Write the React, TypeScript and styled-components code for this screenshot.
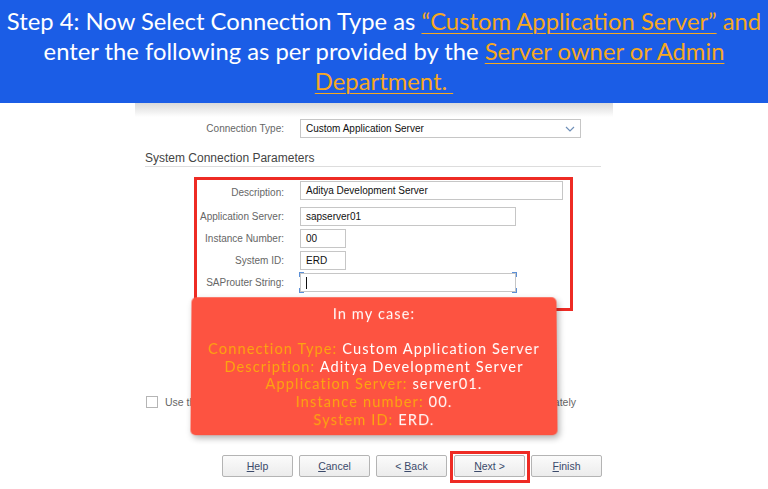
import React from 'react';
import styled, { createGlobalStyle } from 'styled-components';

const GlobalStyle = createGlobalStyle`
  html, body {
    margin: 0;
    padding: 0;
    background: #ffffff;
  }
`;

const Page = styled.div`
  position: relative;
  width: 768px;
  height: 489px;
  overflow: hidden;
  background: #ffffff;
`;

const Banner = styled.div`
  height: 103px;
  box-sizing: border-box;
  padding-top: 6px;
  background: #1b5de6;
  color: #ffffff;
  font-family: Lato, 'Noto Sans', sans-serif;
  font-size: 23.8px;
  line-height: 30px;
  text-align: center;
`;

const Accent = styled.span<{ $underline?: boolean }>`
  color: #f6a81f;
  text-decoration: ${(p) => (p.$underline ? 'underline' : 'none')};
  text-decoration-thickness: 1px;
  text-underline-offset: 3px;
`;

const Dialog = styled.div`
  margin: 0 155px 0 135px;
  height: 386px;
  display: flex;
  flex-direction: column;
  background: linear-gradient(#d9d9d9 0px, #ffffff 14px);
  font-family: 'Liberation Sans', Arial, sans-serif;
  font-size: 10px;
  color: #000;
`;

const FieldGrid = styled.div`
  display: grid;
  grid-template-columns: 87px auto;
  column-gap: 16px;
  align-items: center;
`;

const TopRow = styled(FieldGrid)`
  margin-top: 16px;
  padding-left: 62px;
`;

const Label = styled.div`
  text-align: right;
  color: #666666;
  white-space: nowrap;
`;

const Field = styled.div<{ $w: number }>`
  position: relative;
  box-sizing: border-box;
  width: ${(p) => p.$w}px;
  height: 19px;
  padding: 0 5px;
  display: flex;
  align-items: center;
  border: 1px solid #c6c6c6;
  background: #ffffff;
  color: #111;
  font-size: 10px;
`;

const Corner = styled.span<{ $pos: string }>`
  position: absolute;
  width: 4px;
  height: 4px;
  border-color: #5b8fd6;
  border-style: solid;
  border-width: 0;
  ${(p) => (p.$pos.includes('t') ? 'top: -2px; border-top-width: 1px;' : 'bottom: -2px; border-bottom-width: 1px;')}
  ${(p) => (p.$pos.includes('l') ? 'left: -2px; border-left-width: 1px;' : 'right: -2px; border-right-width: 1px;')}
`;

const Caret = styled.span`
  width: 1px;
  height: 12px;
  background: #111;
`;

const Chevron = styled.svg`
  margin-left: auto;
  width: 10px;
  height: 6px;
`;

const SectionTitle = styled.div`
  margin: 13px 12px 0 10px;
  padding-bottom: 1px;
  border-bottom: 1px solid #dddddd;
  font-size: 12px;
  line-height: 14px;
  color: #444444;
`;

const Highlight = styled(FieldGrid)`
  margin: 10px 0 0 59px;
  width: 379px;
  box-sizing: border-box;
  border: 3px solid #ee2b24;
  padding: 1px 0 16px 0;
  row-gap: 3px;
  & > :nth-child(2) {
    margin-bottom: 4px;
  }
`;

const CheckRow = styled.div`
  margin: 85px 0 0 11px;
  width: 430px;
  display: flex;
  align-items: center;
  gap: 7px;
  color: #666666;
  font-size: 10.5px;
`;

const CheckText = styled.div`
  flex: 1;
  display: flex;
  justify-content: space-between;
  white-space: nowrap;
`;

const CheckBox = styled.span`
  width: 10px;
  height: 10px;
  border: 1px solid #b5b5b5;
  background: #fff;
`;

const ButtonRow = styled.div`
  margin: 47px 0 0 87px;
  display: flex;
  gap: 6px;
  align-items: flex-start;
`;

const Button = styled.div`
  box-sizing: border-box;
  width: 71px;
  height: 22px;
  display: flex;
  align-items: center;
  justify-content: center;
  border: 1px solid #b4b4b4;
  border-radius: 2px;
  background: linear-gradient(#fbfbfb, #ececec);
  color: #3b4a6b;
  font-size: 10.5px;
  white-space: pre;
  u {
    text-decoration-thickness: 1px;
    text-underline-offset: 1px;
  }
`;

const ButtonFrame = styled.div`
  border: 3px solid #ee2b24;
  padding: 1px 2px 3px 1px;
  margin: -4px -5px -6px -3px;
`;

const Callout = styled.div`
  position: absolute;
  left: 191px;
  top: 297px;
  width: 366px;
  height: 138px;
  box-sizing: border-box;
  padding-top: 8px;
  border-radius: 5px;
  background: #fd5341;
  box-shadow: 2px 3px 6px rgba(0, 0, 0, 0.3);
  transform: perspective(600px) rotateX(1.5deg);
  color: #ffffff;
  font-family: Lato, 'Noto Sans', sans-serif;
  font-size: 14.6px;
  letter-spacing: 1.1px;
  line-height: 17.6px;
  text-align: center;
  white-space: nowrap;
`;

const Key = styled.span`
  color: #fca510;
`;

const rows: [string, string][] = [
  ['Connection Type:', 'Custom Application Server'],
  ['Description:', 'Aditya Development Server'],
  ['Application Server:', 'server01.'],
  ['Instance number:', '00.'],
  ['System ID:', 'ERD.'],
];

export default function App() {
  return (
    <Page>
      <GlobalStyle />
      <Banner>
        Step 4: Now Select Connection Type as <Accent $underline>“Custom Application Server”</Accent>
        <Accent> and</Accent>
        <br />
        enter the following as per provided by the <Accent $underline>Server owner or Admin</Accent>
        <br />
        <Accent $underline>Department.&nbsp;</Accent>
      </Banner>

      <Dialog>
        <TopRow>
          <Label>Connection Type:</Label>
          <Field $w={281}>
            Custom Application Server
            <Chevron viewBox="0 0 10 6">
              <path d="M1 1l4 4 4-4" fill="none" stroke="#6f8fb8" strokeWidth="1.2" />
            </Chevron>
          </Field>
        </TopRow>

        <SectionTitle>System Connection Parameters</SectionTitle>

        <Highlight>
          <Label>Description:</Label>
          <Field $w={263}>Aditya Development Server</Field>
          <Label>Application Server:</Label>
          <Field $w={216}>sapserver01</Field>
          <Label>Instance Number:</Label>
          <Field $w={46}>00</Field>
          <Label>System ID:</Label>
          <Field $w={46}>ERD</Field>
          <Label>SAProuter String:</Label>
          <Field $w={216}>
            <Caret />
            <Corner $pos="tl" />
            <Corner $pos="tr" />
            <Corner $pos="bl" />
            <Corner $pos="br" />
          </Field>
        </Highlight>

        <CheckRow>
          <CheckBox />
          <CheckText>
            <span>Use this entry</span>
            <span>and connect immediately</span>
          </CheckText>
        </CheckRow>

        <ButtonRow>
          <Button>
            <u>H</u>elp
          </Button>
          <Button>
            <u>C</u>ancel
          </Button>
          <Button>
            {'< '}
            <u>B</u>ack
          </Button>
          <ButtonFrame>
            <Button>
              <u>N</u>
              {'ext >'}
            </Button>
          </ButtonFrame>
          <Button>
            <u>F</u>inish
          </Button>
        </ButtonRow>
      </Dialog>

      <Callout>
        In my case:
        <br />
        <br />
        {rows.map(([k, v]) => (
          <div key={k}>
            <Key>{k}</Key> {v}
          </div>
        ))}
      </Callout>
    </Page>
  );
}
